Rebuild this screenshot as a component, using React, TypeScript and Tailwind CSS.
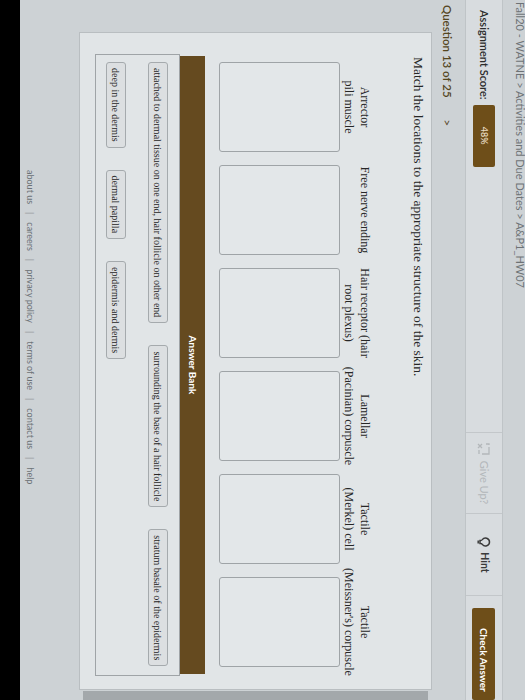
import React from "react";

const labels: [string, string][] = [
  ["Arrector", "pili muscle"],
  ["Free nerve ending", ""],
  ["Hair receptor (hair", "root plexus)"],
  ["Lamellar", "(Pacinian) corpuscle"],
  ["Tactile", "(Merkel) cell"],
  ["Tactile", "(Meissner's) corpuscle"],
];

const answers = [
  "attached to dermal tissue on one end, hair follicle on other end",
  "surrounding the base of a hair follicle",
  "stratum basale of the epidermis",
  "deep in the dermis",
  "dermal papilla",
  "epidermis and dermis",
];

const footerLinks = ["about us", "careers", "privacy policy", "terms of use", "contact us", "help"];

function GiveUpIcon() {
  return (
    <svg width="14" height="14" viewBox="0 0 14 14" fill="none" stroke="#b3b7ba" strokeWidth="1.3">
      <path d="M5 2h7v7" />
      <path d="M2 5V2h1" />
      <path d="M12 12H8" />
      <path d="M2 9l4 4M6 9l-4 4" />
    </svg>
  );
}

function BulbIcon() {
  return (
    <svg width="12" height="14" viewBox="0 0 12 14" fill="none" stroke="#3a3a3a" strokeWidth="1.5">
      <path d="M6 1.5a4 4 0 0 0-2.4 7.2c.5.4.8 1 .8 1.6V11h3.2v-.7c0-.6.3-1.2.8-1.6A4 4 0 0 0 6 1.5z" />
      <path d="M4.6 12.8h2.8" />
    </svg>
  );
}

export default function App() {
  return (
    <div className="w-[525px] h-[700px] overflow-hidden bg-black">
      {/* page is photographed sideways: lay it out landscape, then turn it */}
      <div className="w-[700px] h-[525px] origin-top-left rotate-90 translate-x-[525px] bg-[#cdd2d5] flex flex-col font-['Lato','Open_Sans',sans-serif]">
        {/* breadcrumb, cut at the top */}
        <div className="h-[22px] w-[288px] overflow-hidden flex justify-end">
          <span className="-mt-[3px] whitespace-nowrap text-[11px] text-[#6d7275]">
            ACE 1304 - Fall20 - WATNE &gt; Activities and Due Dates &gt; A&amp;P1_HW07
          </span>
        </div>

        {/* header bar */}
        <div className="h-[38px] flex items-center border-y border-[#bfc4c7] bg-[#d8dcdf]">
          <span className="pl-[10px] text-[11px] font-semibold text-[#2b2b2b] whitespace-nowrap">Assignment Score:</span>
          <div className="ml-[5px] w-[62px] h-[22px] rounded-[2px] bg-[#6e4e19] flex items-center justify-center text-[9px] font-semibold text-[#e8dcc4]">
            48%
          </div>
          <div className="ml-auto flex h-full">
            <div className="w-[81px] border-l border-[#c3c7ca] flex items-center justify-center gap-[5px] text-[11px] text-[#b3b7ba]">
              <GiveUpIcon />
              <span>Give Up?</span>
            </div>
            <div className="w-[82px] border-l border-[#c3c7ca] flex items-center justify-center gap-[4px] text-[10.5px] font-bold text-[#3a3a3a]">
              <BulbIcon />
              <span>Hint</span>
            </div>
            <div className="w-[105px] border-l border-[#c3c7ca] flex items-center pl-[12px]">
              <div className="w-[100px] h-[23px] rounded-[2px] bg-[#6e4e19] flex items-center pl-[20px] text-[10px] font-bold text-white whitespace-nowrap">
                Check Answer
              </div>
            </div>
          </div>
        </div>

        {/* question nav */}
        <div className="h-[33px] flex items-center pl-[5px] pt-[2px] text-[11.5px] font-semibold text-[#55461f]">
          <span>Question 13 of 25</span>
          <span className="ml-[22px] font-normal">&gt;</span>
        </div>

        {/* question card */}
        <div className="flex h-[353px]">
          <div className="ml-[32px] w-[658px] h-full border border-[#b9bec1] bg-[#e1e5e7] font-['Liberation_Serif','Times_New_Roman',serif] text-[#262626]">
            <p className="pl-[24px] pt-[4px] text-[13.5px] leading-[18px]">
              Match the locations to the appropriate structure of the skin.
            </p>
            <div className="mt-[36px] ml-[29px] grid grid-cols-[repeat(6,90px)] gap-x-[13px] text-[12px] leading-[16px]">
              {labels.map(([a, b], i) => (
                <div key={i} className="flex flex-col items-center whitespace-nowrap">
                  <span>{a}</span>
                  {b && <span>{b}</span>}
                </div>
              ))}
            </div>
            <div className="mt-[1px] ml-[29px] grid grid-cols-[repeat(6,90px)] gap-x-[13px]">
              {labels.map((_, i) => (
                <div key={i} className="h-[121px] rounded-[3px] border border-[#9fa4a7] bg-[#e3e7e9]" />
              ))}
            </div>
            <div className="mt-[14px] ml-[21px] w-[622px]">
              <div className="mx-[2px] h-[25px] bg-[#654a1f] flex items-center justify-center font-['Lato',sans-serif] text-[10px] font-bold text-white">
                Answer Bank
              </div>
              <div className="h-[85px] border border-[#9fa4a7] px-[7px] pt-[11px] flex flex-wrap content-start gap-x-[22px] gap-y-[22px]">
                {answers.map((a) => (
                  <div
                    key={a}
                    className="h-[20px] px-[5px] rounded-[3px] border border-[#a5aaad] bg-[#dcdfe1] flex items-center text-[10px] whitespace-nowrap"
                  >
                    {a}
                  </div>
                ))}
              </div>
            </div>
          </div>
          <div className="mt-[4px] ml-[1px] w-[9px] h-[345px] bg-[#a3a8ab]" />
        </div>

        {/* footer links */}
        <div className="h-[59px] flex items-end pb-[4px] pl-[170px] text-[9px] text-[#6b7175]">
          {footerLinks.map((l, i) => (
            <React.Fragment key={l}>
              {i > 0 && <span className="mx-[8px] text-[#9aa0a3]">|</span>}
              <span>{l}</span>
            </React.Fragment>
          ))}
        </div>
        <div className="h-[20px] bg-black" />
      </div>
    </div>
  );
}
